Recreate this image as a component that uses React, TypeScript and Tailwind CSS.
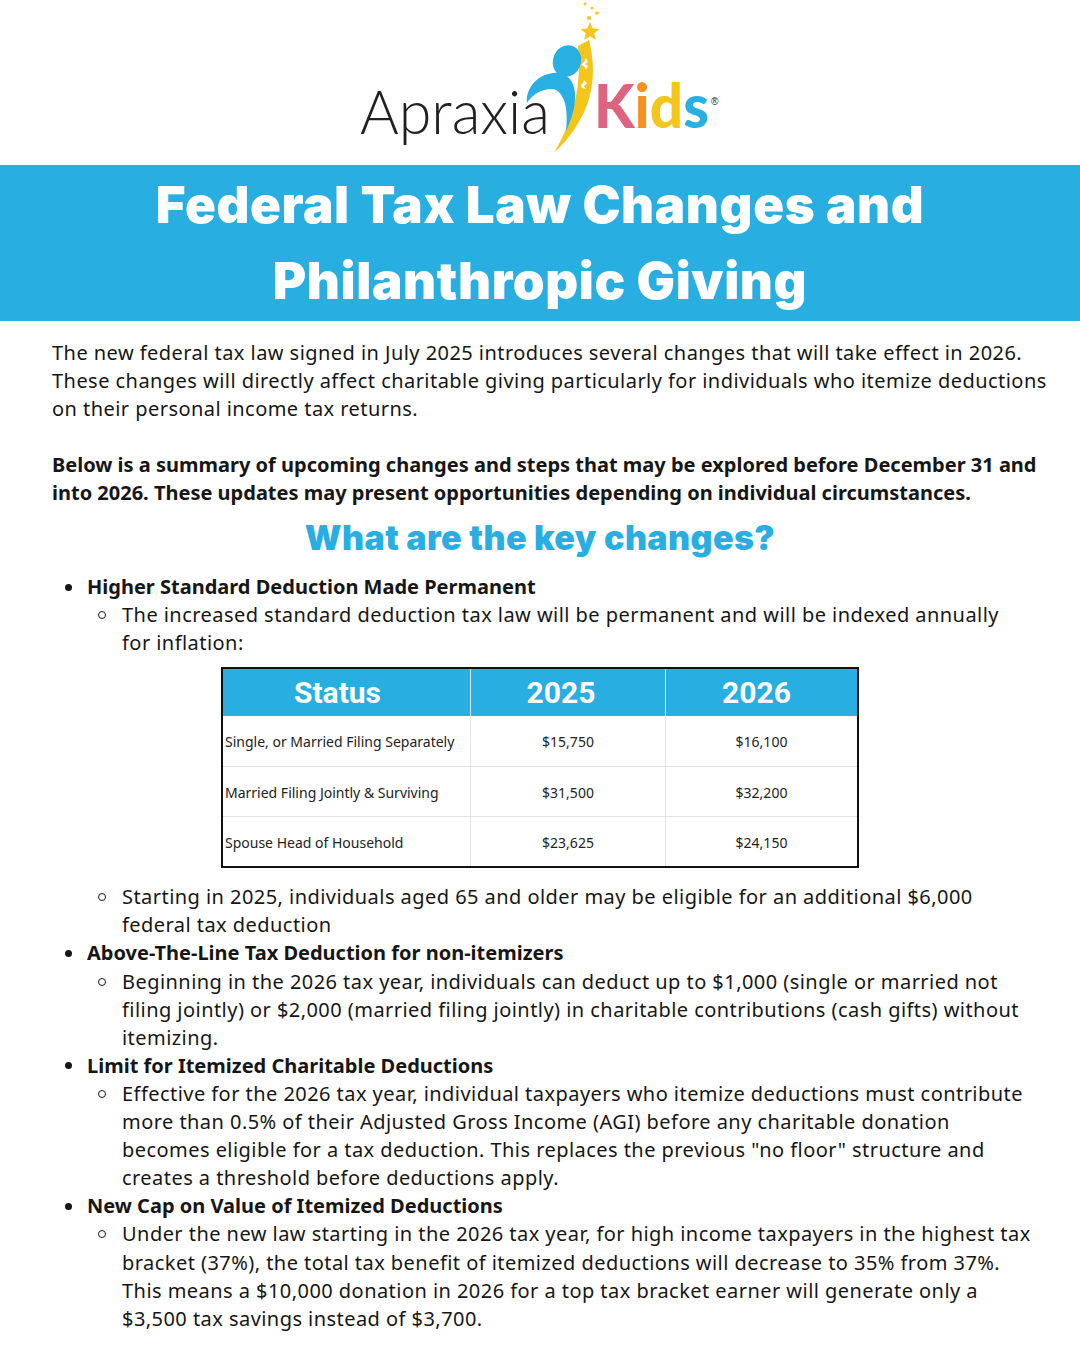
const ink = "text-[#161616]";

function Logo() {
  return (
    <svg width="380" height="160" viewBox="350 0 380 160" aria-label="Apraxia Kids">
      {/* sparkles */}
      <circle cx="585" cy="4" r="1.4" fill="#f4c51b" />
      <circle cx="592" cy="8" r="1.6" fill="#f4c51b" />
      <circle cx="597" cy="13" r="1.8" fill="#f4c51b" />
      <circle cx="589" cy="18" r="2" fill="#f4c51b" />
      <polygon
        points="590,22 592.6,28.4 599.5,28.9 594.2,33.2 595.9,39.9 590,36.2 584.1,39.9 585.8,33.2 580.5,28.9 587.4,28.4"
        fill="#f4c51b"
      />
      {/* yellow tail */}
      <path d="M589 40 C599 80 591 118 554 153 C574 118 582 84 578 46 Z" fill="#f4c51b" />
      <path d="M586 58 l2 4 l-3 2 l3 2 l-2 4 l-2 -4 l-3 -1 l3 -3 Z" fill="#fff" />
      <path d="M584 80 l3 3 l-3 3 l2 3 l-4 -1 l-1 -3 l2 -2 Z" fill="#fff" />
      {/* child */}
      <ellipse cx="567" cy="61" rx="14" ry="16" fill="#2aafe2" transform="rotate(18 567 61)" />
      <path
        d="M527 103 C525 86 542 71 559 73 C577 76 581 100 566 131 C569 106 563 90 552 89 C541 89 532 95 527 103 Z"
        fill="#2aafe2"
      />
      <text
        x="360"
        y="134"
        fontFamily="Lato, 'Liberation Sans', sans-serif"
        fontWeight="300"
        fontSize="62"
        fill="#231f20"
        textLength="190"
        lengthAdjust="spacingAndGlyphs"
      >
        Apraxia
      </text>
      <text
        x="594"
        y="128"
        fontFamily="Lato, 'Liberation Sans', sans-serif"
        fontWeight="900"
        fontSize="61"
        textLength="115"
        lengthAdjust="spacingAndGlyphs"
      >
        <tspan fill="#de6381">K</tspan>
        <tspan fill="#f39325">i</tspan>
        <tspan fill="#f4c51b">d</tspan>
        <tspan fill="#2aafe2">s</tspan>
      </text>
      <text x="711" y="105" fontFamily="'Liberation Sans', sans-serif" fontSize="10" fill="#231f20">
        ®
      </text>
    </svg>
  );
}

function Bullet({ children }: { children: React.ReactNode }) {
  return (
    <div className="flex">
      <div className="w-[35px] h-[28px] flex items-center shrink-0">
        <span className="ml-[13px] w-[7px] h-[7px] rounded-full bg-[#161616]" />
      </div>
      <div className="font-bold tracking-normal whitespace-nowrap">{children}</div>
    </div>
  );
}

function Sub({ children }: { children: React.ReactNode }) {
  return (
    <div className="flex pl-[35px]">
      <div className="w-[35px] h-[28px] flex items-center shrink-0">
        <span className="ml-[11px] w-[8px] h-[8px] rounded-full border-[1.5px] border-[#161616]" />
      </div>
      <div className="whitespace-nowrap">{children}</div>
    </div>
  );
}

const rows = [
  ["Single, or Married Filing Separately", "$15,750", "$16,100"],
  ["Married Filing Jointly & Surviving", "$31,500", "$32,200"],
  ["Spouse Head of Household", "$23,625", "$24,150"],
];

function DeductionTable() {
  return (
    <div className="ml-[169px] mt-[10px] w-[638px] border-2 border-[#111] font-['Noto_Sans',sans-serif] tracking-normal">
      <div className="grid grid-cols-[247px_195px_192px] bg-[#29aee1] h-[47px] text-white font-['Roboto',sans-serif] font-bold text-[30px] leading-none">
        <div className="flex items-center justify-center pr-[18px]">Status</div>
        <div className="flex items-center justify-center pr-[14px] border-l border-[#d8eef8]">2025</div>
        <div className="flex items-center justify-center pr-[10px] border-l border-[#d8eef8]">2026</div>
      </div>
      {rows.map((r, i) => (
        <div
          key={r[0]}
          className={`grid grid-cols-[247px_195px_192px] h-[50px] text-[14px] text-[#222] ${
            i > 0 ? "border-t border-[#e3e3e3]" : ""
          }`}
        >
          <div className="flex items-center pl-[2px] pt-[2px]">{r[0]}</div>
          <div className="flex items-center justify-center border-l border-[#e3e3e3] pt-[2px]">{r[1]}</div>
          <div className="flex items-center justify-center border-l border-[#e3e3e3] pt-[2px]">{r[2]}</div>
        </div>
      ))}
    </div>
  );
}

export default function App() {
  return (
    <div className={`w-[1080px] h-[1350px] bg-white overflow-hidden ${ink} font-['Noto_Sans',sans-serif]`}>
      <div className="h-[165px] flex justify-center">
        <Logo />
      </div>

      <div className="bg-[#29aee1] h-[156px] flex flex-col items-center justify-center text-white font-['Inter',sans-serif] font-black text-[51px] leading-[76px] tracking-[0.6px]">
        <div>Federal Tax Law Changes and</div>
        <div>Philanthropic Giving</div>
      </div>

      <div className="px-[52px] pt-[18px] text-[20px] leading-[28px] tracking-[0.45px]">
        <p className="whitespace-nowrap">
          The new federal tax law signed in July 2025 introduces several changes that will take effect in 2026.
          <br />
          These changes will directly affect charitable giving particularly for individuals who itemize deductions
          <br />
          on their personal income tax returns.
        </p>

        <p className="mt-[28px] font-bold tracking-normal whitespace-nowrap">
          Below is a summary of upcoming changes and steps that may be explored before December 31 and
          <br />
          into 2026. These updates may present opportunities depending on individual circumstances.
        </p>

        <h2 className="mt-[9px] text-center text-[#29aee1] font-['Inter',sans-serif] font-black text-[34px] leading-[44px] tracking-[0.4px]">
          What are the key changes?
        </h2>

        <div className="mt-[13px] leading-[28.1px]">
          <Bullet>Higher Standard Deduction Made Permanent</Bullet>
          <Sub>
            The increased standard deduction tax law will be permanent and will be indexed annually
            <br />
            for inflation:
          </Sub>

          <DeductionTable />

          <div className="mt-[15px]">
            <Sub>
              Starting in 2025, individuals aged 65 and older may be eligible for an additional $6,000
              <br />
              federal tax deduction
            </Sub>
            <Bullet>Above-The-Line Tax Deduction for non-itemizers</Bullet>
            <Sub>
              Beginning in the 2026 tax year, individuals can deduct up to $1,000 (single or married not
              <br />
              filing jointly) or $2,000 (married filing jointly) in charitable contributions (cash gifts) without
              <br />
              itemizing.
            </Sub>
            <Bullet>Limit for Itemized Charitable Deductions</Bullet>
            <Sub>
              Effective for the 2026 tax year, individual taxpayers who itemize deductions must contribute
              <br />
              more than 0.5% of their Adjusted Gross Income (AGI) before any charitable donation
              <br />
              becomes eligible for a tax deduction. This replaces the previous "no floor" structure and
              <br />
              creates a threshold before deductions apply.
            </Sub>
            <Bullet>New Cap on Value of Itemized Deductions</Bullet>
            <Sub>
              Under the new law starting in the 2026 tax year, for high income taxpayers in the highest tax
              <br />
              bracket (37%), the total tax benefit of itemized deductions will decrease to 35% from 37%.
              <br />
              This means a $10,000 donation in 2026 for a top tax bracket earner will generate only a
              <br />
              $3,500 tax savings instead of $3,700.
            </Sub>
          </div>
        </div>
      </div>
    </div>
  );
}
